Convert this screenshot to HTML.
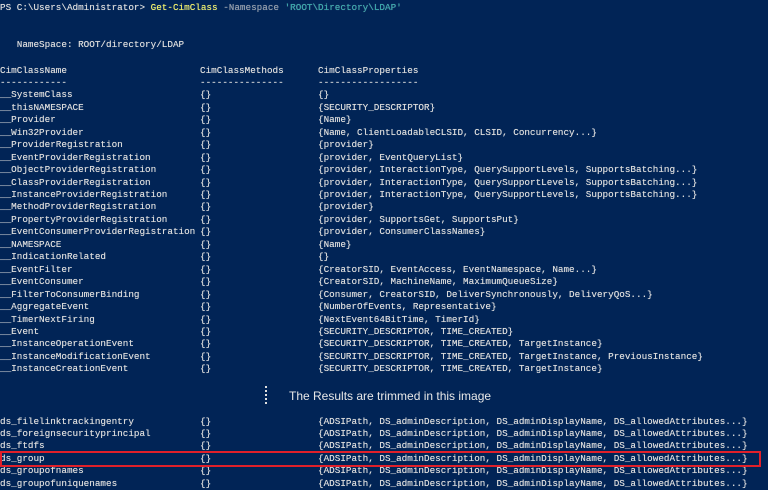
<!DOCTYPE html>
<html><head><meta charset="utf-8"><style>
html,body{margin:0;padding:0;}
body{width:768px;height:490px;background:#012456;overflow:hidden;position:relative;font-family:"Liberation Mono",monospace;font-size:9.3px;color:#dcdcdc;}
.l{position:absolute;left:0;white-space:pre;line-height:12px;text-shadow:0 0 0.4px #dcdcdc;}
.y{color:#f3f35a}.g{color:#8a95a5}.c{color:#2aa5a8}
#box{position:absolute;left:0;top:451px;width:757px;height:12px;border:2px solid #e0202a;box-sizing:content-box;}
#trim{position:absolute;left:289px;top:389px;font-family:"Liberation Sans",sans-serif;font-size:12px;color:#e8e8e8;white-space:pre;}
.d{position:absolute;left:265px;width:2px;height:2px;background:#e0e0e0;}
</style></head><body>
<div class="l" style="top:2px">PS C:\Users\Administrator&gt; <span class="y">Get-CimClass</span> <span class="g">-Namespace</span> <span class="c">'ROOT\Directory\LDAP'</span></div>
<div class="l" style="top:39px">   NameSpace: ROOT/directory/LDAP</div>
<div id="rows"></div>
<div id="trim">The Results are trimmed in this image</div>
<div class="d" style="top:386px"></div><div class="d" style="top:390px"></div><div class="d" style="top:394px"></div><div class="d" style="top:398px"></div><div class="d" style="top:402px"></div>
<div id="box"></div>
<script>
var rows=[
["CimClassName","CimClassMethods","CimClassProperties"],
["------------","---------------","------------------"],
["__SystemClass","{}","{}"],
["__thisNAMESPACE","{}","{SECURITY_DESCRIPTOR}"],
["__Provider","{}","{Name}"],
["__Win32Provider","{}","{Name, ClientLoadableCLSID, CLSID, Concurrency...}"],
["__ProviderRegistration","{}","{provider}"],
["__EventProviderRegistration","{}","{provider, EventQueryList}"],
["__ObjectProviderRegistration","{}","{provider, InteractionType, QuerySupportLevels, SupportsBatching...}"],
["__ClassProviderRegistration","{}","{provider, InteractionType, QuerySupportLevels, SupportsBatching...}"],
["__InstanceProviderRegistration","{}","{provider, InteractionType, QuerySupportLevels, SupportsBatching...}"],
["__MethodProviderRegistration","{}","{provider}"],
["__PropertyProviderRegistration","{}","{provider, SupportsGet, SupportsPut}"],
["__EventConsumerProviderRegistration","{}","{provider, ConsumerClassNames}"],
["__NAMESPACE","{}","{Name}"],
["__IndicationRelated","{}","{}"],
["__EventFilter","{}","{CreatorSID, EventAccess, EventNamespace, Name...}"],
["__EventConsumer","{}","{CreatorSID, MachineName, MaximumQueueSize}"],
["__FilterToConsumerBinding","{}","{Consumer, CreatorSID, DeliverSynchronously, DeliveryQoS...}"],
["__AggregateEvent","{}","{NumberOfEvents, Representative}"],
["__TimerNextFiring","{}","{NextEvent64BitTime, TimerId}"],
["__Event","{}","{SECURITY_DESCRIPTOR, TIME_CREATED}"],
["__InstanceOperationEvent","{}","{SECURITY_DESCRIPTOR, TIME_CREATED, TargetInstance}"],
["__InstanceModificationEvent","{}","{SECURITY_DESCRIPTOR, TIME_CREATED, TargetInstance, PreviousInstance}"],
["__InstanceCreationEvent","{}","{SECURITY_DESCRIPTOR, TIME_CREATED, TargetInstance}"]];
var A="{ADSIPath, DS_adminDescription, DS_adminDisplayName, DS_allowedAttributes...}";
var rows2=["ds_filelinktrackingentry","ds_foreignsecurityprincipal","ds_ftdfs","ds_group","ds_groupofnames","ds_groupofuniquenames"];
var h="";
function mk(top,a,b,c){return '<div class="l" style="top:'+top+'px;left:0">'+a+'</div><div class="l" style="top:'+top+'px;left:200px">'+b+'</div><div class="l" style="top:'+top+'px;left:318px">'+c+'</div>';}
for(var i=0;i<rows.length;i++){h+=mk((64.5+i*12.45).toFixed(1),rows[i][0],rows[i][1],rows[i][2]);}
for(var j=0;j<rows2.length;j++){h+=mk((415.5+j*12.45).toFixed(1),rows2[j],"{}",A);}
document.getElementById("rows").innerHTML=h;
</script>
</body></html>
